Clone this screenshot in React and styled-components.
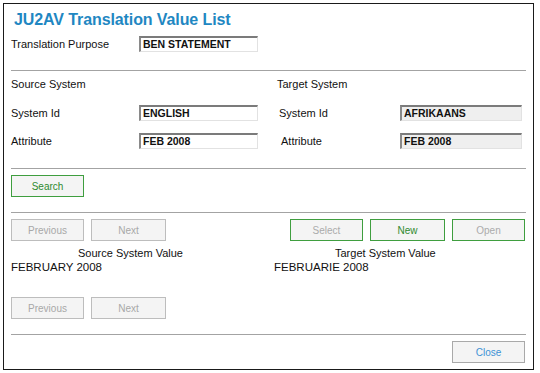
import styled, { createGlobalStyle } from "styled-components";

const GlobalStyle = createGlobalStyle`
  html, body {
    margin: 0;
    padding: 0;
    background: #ffffff;
  }
  body {
    font-family: "Liberation Sans", Arial, sans-serif;
    color: #000;
  }
`;

const App = () => {
  return (
    <>
      <GlobalStyle />
      <Frame>
        <Title>JU2AV Translation Value List</Title>
        <Field>
          <Label width={128}>Translation Purpose</Label>
          <Input width={119}>BEN STATEMENT</Input>
        </Field>
        <Rule top={17} />

        <Columns>
          <Column>
            <SectionHead>Source System</SectionHead>
            <Field top={12}>
              <Label width={128}>System Id</Label>
              <Input width={119}>ENGLISH</Input>
            </Field>
            <Field top={10}>
              <Label width={128}>Attribute</Label>
              <Input width={119}>FEB 2008</Input>
            </Field>
          </Column>
          <Column>
            <SectionHead indent={3}>Target System</SectionHead>
            <Field top={12}>
              <Label width={126} indent={5}>
                System Id
              </Label>
              <Input width={122} readOnly>
                AFRIKAANS
              </Input>
            </Field>
            <Field top={10}>
              <Label width={126} indent={7}>
                Attribute
              </Label>
              <Input width={122} readOnly>
                FEB 2008
              </Input>
            </Field>
          </Column>
        </Columns>
        <Rule top={18} />

        <ButtonRow top={6}>
          <Group>
            <Button tone="green">Search</Button>
          </Group>
        </ButtonRow>
        <Rule top={15} />

        <ButtonRow top={6}>
          <Group>
            <Button tone="off">Previous</Button>
            <Button tone="off" wide>
              Next
            </Button>
          </Group>
          <Group gap={7}>
            <Button tone="greenOff">Select</Button>
            <Button tone="green" wide>
              New
            </Button>
            <Button tone="greenOff">Open</Button>
          </Group>
        </ButtonRow>

        <Columns>
          <Column>
            <ValueHead indent={67}>Source System Value</ValueHead>
            <ValueText>FEBRUARY 2008</ValueText>
          </Column>
          <Column>
            <ValueHead indent={61}>Target System Value</ValueHead>
            <ValueText>FEBRUARIE 2008</ValueText>
          </Column>
        </Columns>

        <ButtonRow top={23}>
          <Group>
            <Button tone="off">Previous</Button>
            <Button tone="off" wide>
              Next
            </Button>
          </Group>
        </ButtonRow>
        <Rule top={15} />

        <ButtonRow top={6}>
          <span />
          <Button tone="blue">Close</Button>
        </ButtonRow>
      </Frame>
    </>
  );
};

const Frame = styled.div`
  margin: 3px 0 0 3px;
  width: 531px;
  height: 367px;
  box-sizing: border-box;
  border: 1px solid #1a1a1a;
  padding: 0 7px 0 7px;
  display: flex;
  flex-direction: column;
`;

const Title = styled.h1`
  margin: 0;
  padding-left: 3px;
  height: 31px;
  line-height: 32px;
  font-family: "Liberation Sans", Arial, sans-serif;
  font-size: 16px;
  font-weight: bold;
  letter-spacing: -0.1px;
  color: #1f87c2;
`;

const Field = styled.div`
  display: flex;
  align-items: center;
  height: 18px;
  margin-top: ${(p) => p.top || 0}px;
`;

const Label = styled.div`
  width: ${(p) => p.width}px;
  padding-left: ${(p) => p.indent || 0}px;
  box-sizing: border-box;
  font-size: 11px;
  color: #111;
  white-space: nowrap;
`;

const Input = styled.div`
  width: ${(p) => p.width}px;
  height: 16px;
  box-sizing: border-box;
  border-top: 2px solid #7b7b7b;
  border-left: 2px solid #8a8a8a;
  border-right: 1px solid #e2e2e2;
  border-bottom: 1px solid #e2e2e2;
  background: ${(p) => (p.readOnly ? "#efefef" : "#ffffff")};
  padding-left: 2px;
  font-size: 10.5px;
  font-weight: bold;
  line-height: 13px;
  color: #111;
  white-space: nowrap;
  overflow: hidden;
`;

const Rule = styled.div`
  height: 0;
  border-top: 1px solid #a3a3a3;
  margin-top: ${(p) => p.top || 0}px;
`;

const Columns = styled.div`
  display: grid;
  grid-template-columns: 263px 1fr;
`;

const Column = styled.div`
  display: flex;
  flex-direction: column;
`;

const SectionHead = styled.div`
  margin-top: 5px;
  height: 16px;
  line-height: 16px;
  padding-left: ${(p) => p.indent || 0}px;
  font-size: 11px;
  color: #111;
`;

const ButtonRow = styled.div`
  display: flex;
  justify-content: space-between;
  align-items: center;
  margin-top: ${(p) => p.top || 0}px;
  padding-right: 1px;
`;

const Group = styled.div`
  display: flex;
  gap: ${(p) => p.gap || 7}px;
`;

const tones = {
  green: { border: "#3f9e3f", color: "#2f8a2f" },
  greenOff: { border: "#3f9e3f", color: "#ababab" },
  off: { border: "#bdbdbd", color: "#a8a8a8" },
  blue: { border: "#a9a9a9", color: "#3d92d4" },
};

const Button = styled.button`
  width: ${(p) => (p.wide ? 75 : 73)}px;
  height: 22px;
  box-sizing: border-box;
  border: 1px solid ${(p) => tones[p.tone].border};
  background: #f4f4f4;
  color: ${(p) => tones[p.tone].color};
  font-family: "Liberation Sans", Arial, sans-serif;
  font-size: 10px;
  padding: 0;
  cursor: default;
`;

const ValueHead = styled.div`
  margin-top: 5px;
  padding-left: ${(p) => p.indent}px;
  font-size: 11px;
  line-height: 14px;
  color: #111;
`;

const ValueText = styled.div`
  font-size: 11.5px;
  line-height: 14px;
  color: #111;
`;

export default App;
